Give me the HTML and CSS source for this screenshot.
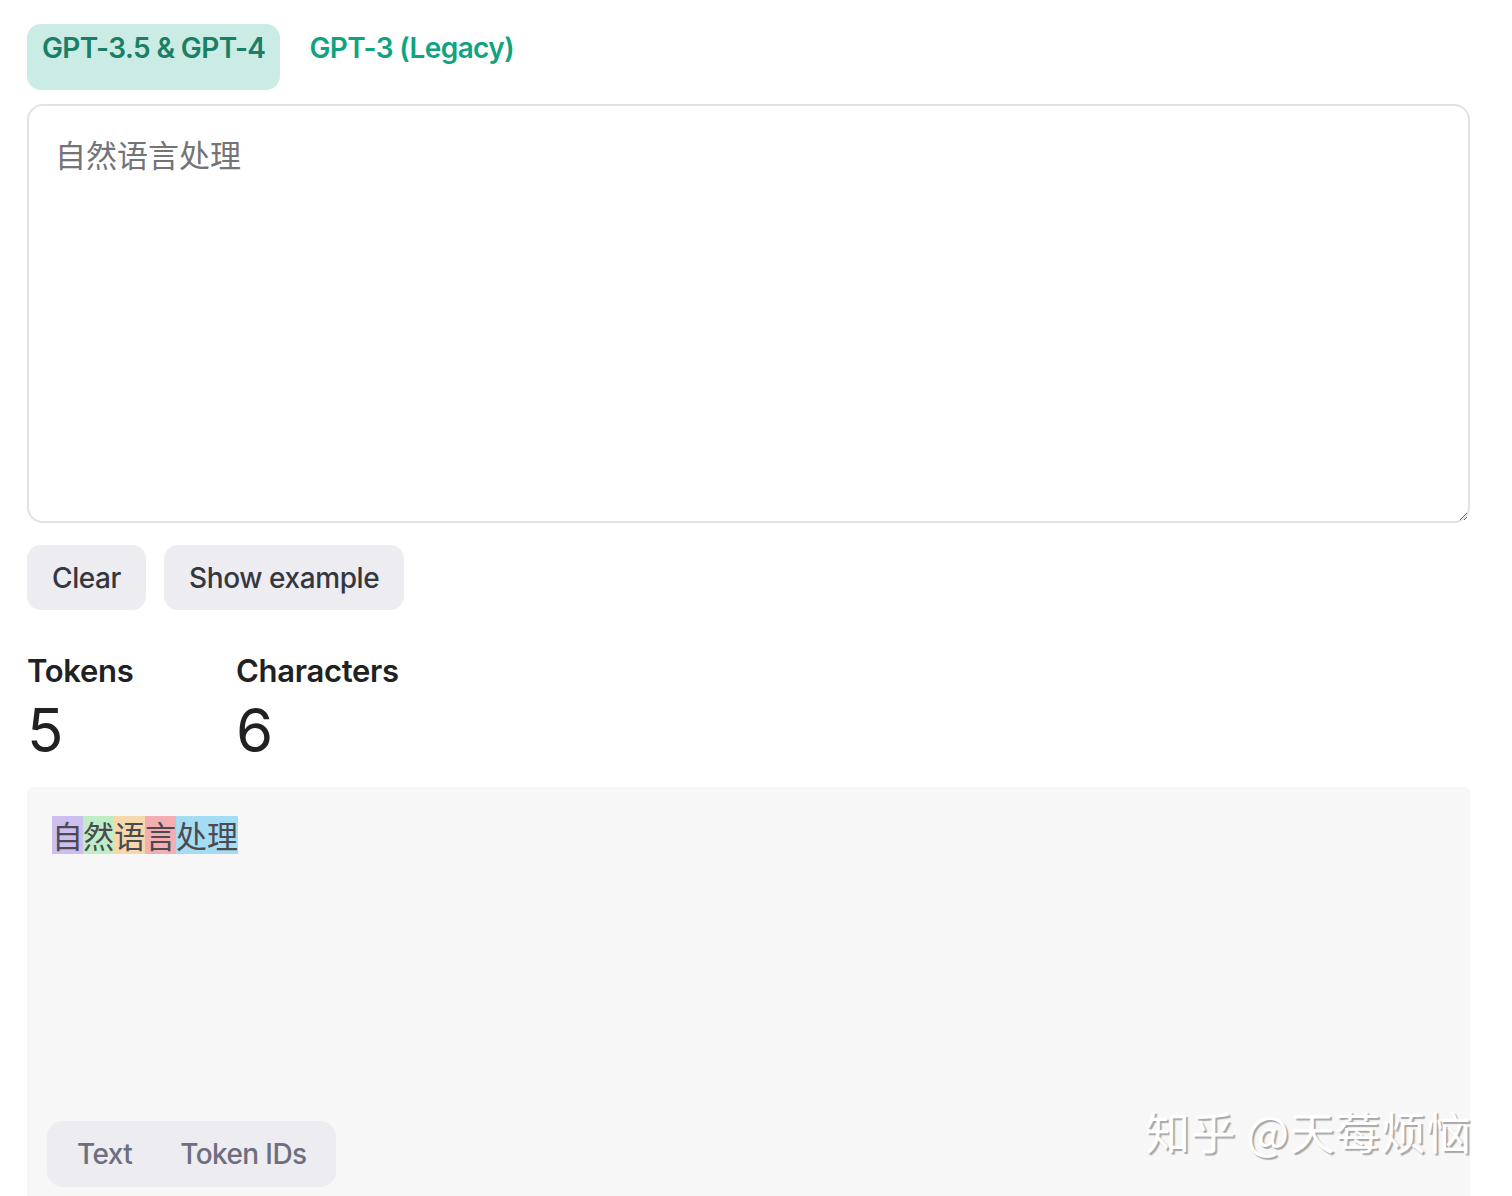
FILE: index.html
```html
<!DOCTYPE html>
<html lang="zh-CN">
<head>
    <meta charset="UTF-8">
    <meta name="viewport" content="width=device-width, initial-scale=1.0">
    <title>Tokenizer</title>
    <link rel="stylesheet" href="styles.css">
</head>
<body>
    <div class="page">
        <div class="tabs">
            <button class="tab active">GPT-3.5 &amp; GPT-4</button>
            <button class="tab">GPT-3 (Legacy)</button>
        </div>

        <textarea class="input" spellcheck="false">自然语言处理</textarea>

        <div class="actions">
            <button class="btn">Clear</button>
            <button class="btn">Show example</button>
        </div>

        <div class="stats">
            <div class="stat">
                <div class="stat-label">Tokens</div>
                <div class="stat-value">5</div>
            </div>
            <div class="stat">
                <div class="stat-label">Characters</div>
                <div class="stat-value">6</div>
            </div>
        </div>

        <div class="output">
            <div class="tokens"><span class="tok t1">自</span><span class="tok t2">然</span><span class="tok t3">语</span><span class="tok t4">言</span><span class="tok t5">处理</span></div>

            <div class="toggle">
                <button class="toggle-btn">Text</button>
                <button class="toggle-btn">Token IDs</button>
            </div>
        </div>
    </div>

    <div class="watermark">知乎 @天莓烦恼</div>
</body>
</html>
```

FILE: styles.css
```css
body {
    margin: 0;
    background: #fff;
    font-family: Inter, "Noto Sans", "Noto Sans CJK SC", sans-serif;
    color: #202123;
    overflow: hidden;
}
.page {
    width: 1443px;
    margin-left: 27px;
    padding-top: 24px;
}
button {
    font-family: inherit;
    border: none;
    cursor: pointer;
}
.tabs {
    display: flex;
    gap: 14px;
}
.tab {
    height: 66px;
    padding: 0 15px 18px;
    border-radius: 14px;
    background: transparent;
    color: #10a37f;
    font-size: 28px;
    font-weight: 600;
    letter-spacing: -0.6px;
}
.tab.active {
    background: #cbece4;
    color: #1a7f64;
}
.input {
    display: block;
    box-sizing: border-box;
    width: 100%;
    height: 419px;
    margin-top: 14px;
    padding: 26px 26px;
    border: 2px solid #e1e1e6;
    border-radius: 16px;
    font-family: "Noto Sans CJK SC", sans-serif;
    font-size: 31px;
    line-height: 44px;
    color: #737378;
    outline: none;
    resize: vertical;
}
.actions {
    display: flex;
    gap: 18px;
    margin-top: 22px;
}
.btn {
    height: 65px;
    padding: 0 25px;
    border-radius: 14px;
    background: #ececf1;
    color: #353740;
    font-size: 28px;
    font-weight: 500;
    letter-spacing: -0.4px;
}
.stats {
    display: flex;
    margin-top: 42px;
}
.stat {
    width: 209px;
}
.stat-label {
    font-size: 31px;
    font-weight: 600;
    letter-spacing: -0.3px;
    line-height: 38px;
}
.stat-value {
    margin-top: 5px;
    font-size: 60px;
    font-weight: 400;
    line-height: 70px;
}
.output {
    box-sizing: border-box;
    height: 430px;
    margin-top: 22px;
    padding: 29px 20px 30px 25px;
    background: #f7f7f8;
    border-radius: 6px;
    display: flex;
    flex-direction: column;
    justify-content: space-between;
    align-items: flex-start;
}
.tokens {
    font-family: "Noto Sans CJK SC", sans-serif;
    font-size: 31px;
    line-height: 38px;
    color: #4a4a50;
}
.tok {
    display: inline-block;
}
.t1 { background: rgba(107, 64, 216, 0.3); }
.t2 { background: rgba(104, 222, 122, 0.4); }
.t3 { background: rgba(244, 172, 54, 0.4); }
.t4 { background: rgba(239, 65, 70, 0.4); }
.t5 { background: rgba(39, 181, 234, 0.4); }
.toggle {
    display: flex;
    margin-left: -5px;
    padding: 0 6px;
    height: 66px;
    align-items: center;
    background: #ececf1;
    border-radius: 16px;
}
.toggle-btn {
    background: transparent;
    padding: 0 24px;
    color: #6e6e80;
    font-size: 28px;
    font-weight: 500;
    letter-spacing: -0.6px;
}
.watermark {
    position: absolute;
    left: 1145px;
    top: 1098px;
    font-family: "Noto Sans CJK SC", sans-serif;
    font-size: 45px;
    letter-spacing: 0.5px;
    color: #fff;
    text-shadow: 2px 2px 1px #a8a8a8;
    white-space: nowrap;
}
```
